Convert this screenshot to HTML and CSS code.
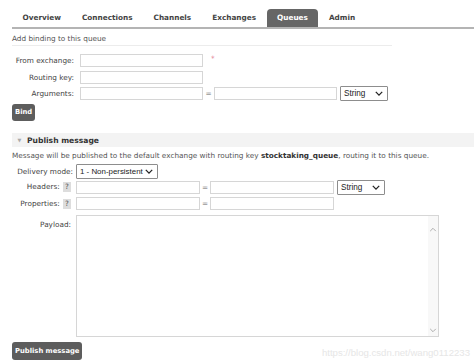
FILE: index.html
```html
<!DOCTYPE html>
<html>
<head>
<meta charset="utf-8">
<link rel="stylesheet" href="styles.css">
</head>
<body>
<div class="page">
  <ul class="tabs">
    <li><a>Overview</a></li>
    <li><a>Connections</a></li>
    <li><a>Channels</a></li>
    <li><a>Exchanges</a></li>
    <li class="active"><a>Queues</a></li>
    <li><a>Admin</a></li>
  </ul>

  <div class="content">
    <div class="subhead">Add binding to this queue</div>

    <div class="form form-bind">
      <div class="row">
        <label class="lbl">From exchange:</label>
        <span class="input w123"></span>
        <span class="req">*</span>
      </div>
      <div class="row">
        <label class="lbl">Routing key:</label>
        <span class="input w123"></span>
      </div>
      <div class="row">
        <label class="lbl">Arguments:</label>
        <span class="input w123"></span>
        <span class="eq">=</span>
        <span class="input w123"></span>
        <span class="select w47">String<svg class="chev" viewBox="0 0 10 6"><path d="M1 1 L5 5 L9 1" fill="none" stroke="#222" stroke-width="1.6"/></svg></span>
      </div>
    </div>
    <div class="btnrow"><span class="btn">Bind</span></div>

    <div class="section-head"><span class="tri">&#9660;</span>Publish message</div>
    <div class="msg">Message will be published to the default exchange with routing key <b>stocktaking_queue</b>, routing it to this queue.</div>

    <div class="form form-pub">
      <div class="row r-delivery">
        <label class="lbl">Delivery mode:</label>
        <span class="select w81">1 - Non-persistent<svg class="chev" viewBox="0 0 10 6"><path d="M1 1 L5 5 L9 1" fill="none" stroke="#222" stroke-width="1.6"/></svg></span>
      </div>
      <div class="row">
        <label class="lbl">Headers: <span class="help">?</span></label>
        <span class="input w124"></span>
        <span class="eq">=</span>
        <span class="input w124"></span>
        <span class="select w47">String<svg class="chev" viewBox="0 0 10 6"><path d="M1 1 L5 5 L9 1" fill="none" stroke="#222" stroke-width="1.6"/></svg></span>
      </div>
      <div class="row">
        <label class="lbl">Properties: <span class="help">?</span></label>
        <span class="input w124"></span>
        <span class="eq">=</span>
        <span class="input w124"></span>
      </div>
      <div class="row r-payload">
        <label class="lbl">Payload:</label>
        <div class="textarea">
          <div class="ta-body"></div>
          <div class="scrollbar">
            <svg class="sarrow" viewBox="0 0 10 6"><path d="M1.5 5 L5 1.5 L8.5 5" fill="none" stroke="#aaa" stroke-width="1.2"/></svg>
            <svg class="sarrow" viewBox="0 0 10 6"><path d="M1.5 1 L5 4.5 L8.5 1" fill="none" stroke="#aaa" stroke-width="1.2"/></svg>
          </div>
        </div>
      </div>
    </div>
    <div class="btnrow btnrow-pub"><span class="btn">Publish message</span></div>
  </div>
  <div class="watermark">https://blog.csdn.net/wang0112233</div>
</div>
</body>
</html>
```

FILE: styles.css
```css
html, body {
  margin: 0;
  padding: 0;
  background: #fff;
}
body {
  font-family: "DejaVu Sans", Verdana, sans-serif;
  font-size: 7.3px;
  color: #444;
  width: 474px;
  height: 364px;
  overflow: hidden;
}
.page {
  position: relative;
  width: 474px;
  height: 364px;
}
.tabs {
  list-style: none;
  margin: 0 0 0 12px;
  padding: 9px 0 0 0;
  display: flex;
  border-bottom: 2px solid #b4b4b4;
}
.tabs li a {
  display: block;
  height: 18px;
  line-height: 18px;
  padding: 0 10.5px;
  font-weight: bold;
  color: #444;
}
.tabs li.active a {
  background: #666;
  color: #fff;
  border-radius: 4px 4px 0 0;
}
.content {
  padding-left: 12px;
}
.subhead {
  width: 380px;
  height: 16px;
  line-height: 20px;
  border-bottom: 1px solid #ececec;
  color: #555;
}
.form-bind {
  margin-top: 8px;
}
.row {
  display: flex;
  align-items: center;
  height: 13px;
  margin-bottom: 3.5px;
}
.lbl {
  display: block;
  text-align: right;
  color: #444;
  flex: none;
  white-space: nowrap;
}
.form-bind .lbl {
  width: 62px;
  margin-right: 6px;
}
.form-pub .lbl {
  width: 59px;
  margin-right: 5px;
}
.input {
  display: block;
  height: 11px;
  border: 1px solid #d6d6d6;
  background: #fff;
  flex: none;
}
.w123 { width: 121px; }
.w124 { width: 122px; }
.req {
  color: #e07a90;
  margin-left: 8px;
  position: relative;
  top: -2px;
}
.eq {
  display: block;
  width: 11px;
  text-align: center;
  color: #666;
}
.form-pub .eq { width: 10px; }
.select {
  display: flex;
  align-items: center;
  justify-content: space-between;
  border: 1px solid #8d8d8d;
  border-radius: 1px;
  font-family: "Liberation Sans", Arial, sans-serif;
  font-size: 8.2px;
  color: #222;
  padding: 0 4px 0 3px;
  margin-left: 3px;
  box-sizing: border-box;
  height: 15px;
  flex: none;
  white-space: nowrap;
}
.w47 { width: 48px; }
.w81 { width: 82px; margin-left: 0; font-size: 7.9px; }
.chev {
  width: 8px;
  height: 5px;
  flex: none;
}
.btnrow {
  height: 18px;
}
.btn {
  display: inline-block;
  background: #5d5d5d;
  color: #fff;
  font-weight: bold;
  height: 17px;
  line-height: 17px;
  padding: 0 3px;
  border-radius: 3px;
  font-size: 6.8px;
}
.section-head {
  margin-top: 11px;
  height: 14px;
  line-height: 14px;
  background: #f3f3f3;
  font-weight: bold;
  color: #333;
  font-size: 7.6px;
}
.tri {
  display: inline-block;
  color: #aaa;
  font-size: 5px;
  width: 15px;
  text-align: center;
  vertical-align: 1px;
}
.msg {
  height: 17px;
  line-height: 17px;
  color: #555;
  white-space: nowrap;
}
.msg b { color: #333; }
.form-pub .row {
  margin-bottom: 3.5px;
}
.r-delivery .lbl {
  width: 61px;
  margin-right: 3px;
}
.form-pub .row.r-delivery {
  height: 15px;
  margin-bottom: 2px;
}
.help {
  display: inline-block;
  background: #ddd;
  color: #555;
  width: 8px;
  height: 10px;
  line-height: 10px;
  text-align: center;
  margin-left: 1px;
}
.form-pub .row.r-payload {
  align-items: flex-start;
  height: 123px;
  margin-top: 5px;
  margin-bottom: 4px;
}
.r-payload .lbl {
  margin-top: 5px;
}
.textarea {
  display: flex;
  width: 361px;
  height: 120px;
  border: 1px solid #d6d6d6;
  flex: none;
}
.ta-body {
  flex: 1;
}
.scrollbar {
  width: 10px;
  background: #f8f8f8;
  display: flex;
  flex-direction: column;
  justify-content: space-between;
  align-items: center;
  padding: 11px 0 3px 0;
}
.sarrow {
  width: 8px;
  height: 5px;
}
.btnrow-pub {
  margin-top: 0;
}
.btnrow-pub .btn {
  height: 18px;
  line-height: 18px;
}
.watermark {
  position: absolute;
  right: 4px;
  bottom: 6px;
  font-family: "Liberation Sans", Arial, sans-serif;
  font-size: 9.6px;
  color: #e6e6e6;
}
```
